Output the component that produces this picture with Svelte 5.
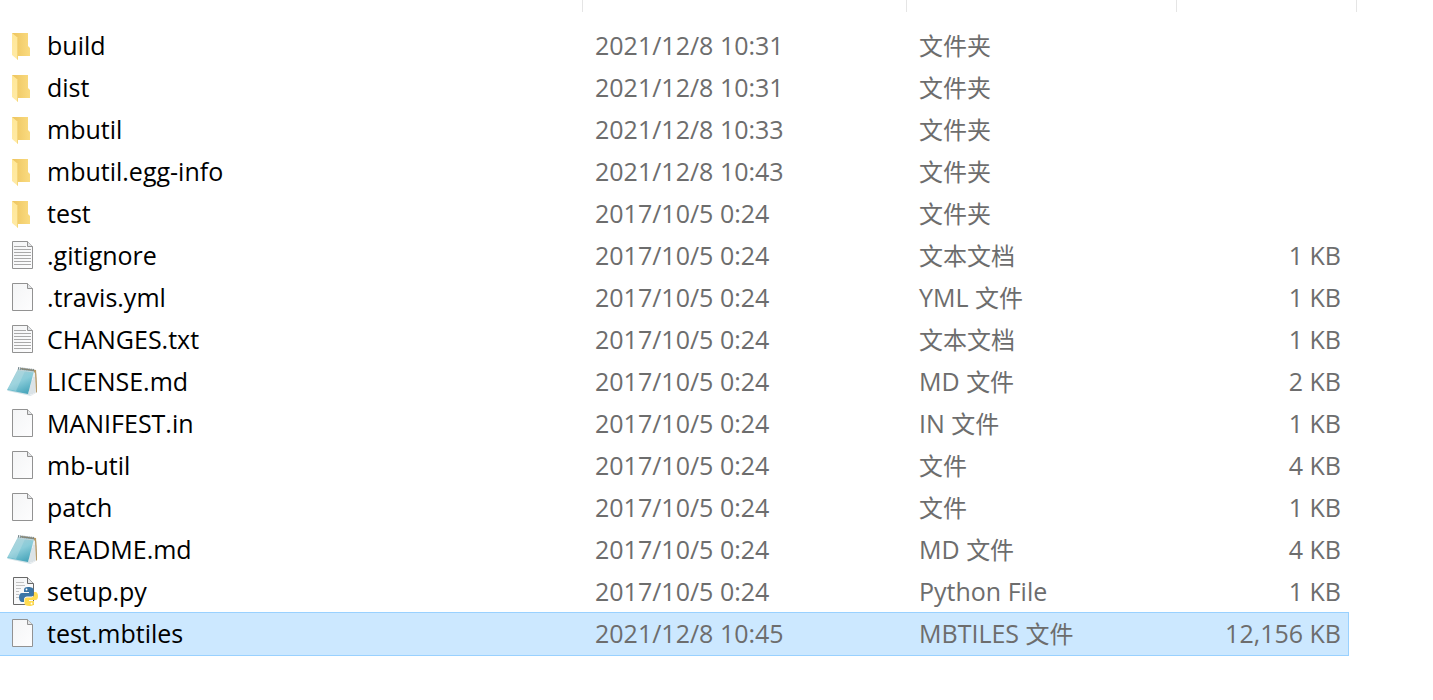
<script>
	let selected = "test.mbtiles";

	const files = [
		{ name: "build", icon: "folder", date: "2021/12/8 10:31", type: "文件夹", size: "" },
		{ name: "dist", icon: "folder", date: "2021/12/8 10:31", type: "文件夹", size: "" },
		{ name: "mbutil", icon: "folder", date: "2021/12/8 10:33", type: "文件夹", size: "" },
		{ name: "mbutil.egg-info", icon: "folder", date: "2021/12/8 10:43", type: "文件夹", size: "" },
		{ name: "test", icon: "folder", date: "2017/10/5 0:24", type: "文件夹", size: "" },
		{ name: ".gitignore", icon: "text", date: "2017/10/5 0:24", type: "文本文档", size: "1 KB" },
		{ name: ".travis.yml", icon: "blank", date: "2017/10/5 0:24", ext: "YML", type: "文件", size: "1 KB" },
		{ name: "CHANGES.txt", icon: "text", date: "2017/10/5 0:24", type: "文本文档", size: "1 KB" },
		{ name: "LICENSE.md", icon: "notepad", date: "2017/10/5 0:24", ext: "MD", type: "文件", size: "2 KB" },
		{ name: "MANIFEST.in", icon: "blank", date: "2017/10/5 0:24", ext: "IN", type: "文件", size: "1 KB" },
		{ name: "mb-util", icon: "blank", date: "2017/10/5 0:24", type: "文件", size: "4 KB" },
		{ name: "patch", icon: "blank", date: "2017/10/5 0:24", type: "文件", size: "1 KB" },
		{ name: "README.md", icon: "notepad", date: "2017/10/5 0:24", ext: "MD", type: "文件", size: "4 KB" },
		{ name: "setup.py", icon: "python", date: "2017/10/5 0:24", ext: "Python File", type: "", size: "1 KB" },
		{ name: "test.mbtiles", icon: "blank", date: "2021/12/8 10:45", ext: "MBTILES", type: "文件", size: "12,156 KB" },
	];
</script>

<!-- gradients shared by all the row icons -->
<svg class="defs" width="0" height="0" aria-hidden="true">
	<defs>
		<linearGradient id="folder-back" x1="0" y1="0" x2="1" y2="0">
			<stop offset="0" stop-color="#edc45f" />
			<stop offset="1" stop-color="#fadb80" />
		</linearGradient>
		<linearGradient id="folder-front" x1="0" y1="0" x2="0" y2="1">
			<stop offset="0" stop-color="#ffe797" />
			<stop offset="1" stop-color="#ffeaa6" />
		</linearGradient>
		<linearGradient id="paper" x1="0" y1="0" x2="1" y2="1">
			<stop offset="0" stop-color="#f4f5f6" />
			<stop offset="1" stop-color="#fdfdfe" />
		</linearGradient>
		<linearGradient id="cover" x1="0.2" y1="0" x2="0.7" y2="1">
			<stop offset="0" stop-color="#a9cfd7" />
			<stop offset="0.5" stop-color="#8accd9" />
			<stop offset="1" stop-color="#45a4ba" />
		</linearGradient>
	</defs>
</svg>

<table>
	<colgroup>
		<col />
		<col class="col-date" />
		<col class="col-type" />
		<col class="col-size" />
		<col class="col-gutter" />
	</colgroup>
	<thead>
		<tr>
			<th aria-label="名称"><div></div></th>
			<th aria-label="修改日期"><div></div></th>
			<th aria-label="类型"><div></div></th>
			<th aria-label="大小" colspan="2"><div></div></th>
		</tr>
	</thead>
	<tbody>
		{#each files as file}
			<tr class:selected={file.name === selected} on:click={() => (selected = file.name)}>
				<td class="name">
					<div>
						<svg width="32" height="32" viewBox="0 0 32 32" aria-hidden="true">
							{#if file.icon === "folder"}
								<path d="M5 4H21V17L23 19V27H7Z" fill="url(#folder-back)" />
								<path d="M5 4L11 9V31L5 26Z" fill="url(#folder-front)" />
								<path d="M10.500 8.500V30.500" stroke="#f5d67a" stroke-width="1" />
							{:else if file.icon === "notepad"}
								<path d="M14 3L29 5L30 27L24 30L18 27Z" fill="#9c7d4c" />
								<path d="M27 5L29 5L30 27L28 28Z" fill="#b89a66" />
								<path d="M26 6L28 8L29 28L24 31L18 28Z" fill="#e9eef1" />
								<path d="M25 15L25 29M23 21L23 29M27 12L27 28" stroke="#bccbd2" stroke-width="0.6" />
								<path d="M0 25L22 28L24 31L1 26Z" fill="#d3e3e8" />
								<path d="M11 4L27 6L21 29L0 25Z" fill="url(#cover)" />
								<path d="M11 5L18 6L9 26L1 24Z" fill="#c3e3e9" opacity="0.35" />
								<path d="M11 3.500L27 5.500" stroke="#76898f" stroke-width="3" stroke-dasharray="1.200 0.900" />
								<path d="M11 5L27 7" stroke="#c3d6da" stroke-width="1" />
							{:else}
								<path
									d={file.icon === "python" ? "M6.500 2.500H20.500L26.500 8.500V29.500H6.500Z" : "M5.500 2.500H20.500L25.500 7.500V29.500H5.500Z"}
									fill="url(#paper)"
									stroke={file.icon === "python" ? "#686868" : "#929292"}
								/>
								<path
									d={file.icon === "python" ? "M20.500 2.500V8.500H26.500" : "M20.500 2.500V7.500H25.500"}
									fill="#e4e6e8"
									stroke={file.icon === "python" ? "#686868" : "#929292"}
								/>
								{#if file.icon === "text"}
									<path
										d="M7 7.500H19M7 10.500H24M7 13.500H24M7 16.500H24M7 19.500H24M7 22.500H24M7 25.500H24"
										stroke="#a9a9a9"
									/>
								{:else if file.icon === "python"}
									<path
										d="M9 7.500H17M9 10.500H18M9 13.500H14M9 16.500H12M9 19.500H12M9 22.500H12"
										stroke="#c2c2c2"
									/>
									<path
										d="M21 12C18 12 17 13 17 15V17H22V18H15C13 18 12 20 12 22.500S13.500 27 15 27H17V24.500C17 22.500 18.500 21.500 20 21.500H24.500C26 21.500 26.500 20.500 26.500 19V15C26.500 13 25 12 21 12Z"
										fill="#3a75a5"
									/>
									<path
										d="M22.500 31C26 31 27 30 27 28.500V26H22V25H28.500C30.500 25 31 23 31 21S30 17 28.500 17H27V19.500C27 21.500 25.500 22.500 24 22.500H20C18.500 22.500 17.500 23.500 17.500 25V28.500C17.500 30 19 31 22.500 31Z"
										fill="#ffdb50"
									/>
									<circle cx="19.500" cy="14.500" r="0.900" fill="#fff" />
									<circle cx="24.500" cy="28.500" r="0.900" fill="#fff" />
								{/if}
							{/if}
						</svg>
						<span>{file.name}</span>
					</div>
				</td>
				<td>{file.date}</td>
				<td>{file.ext ?? ""} <span class="kind">{file.type}</span></td>
				<td class="size">{file.size}</td>
			</tr>
		{/each}
	</tbody>
</table>

<style>
	:global(body) {
		background: #fff;
	}

	.defs {
		position: absolute;
	}

	table {
		width: calc(100% - 76px);
		padding-bottom: 4px;
		table-layout: fixed;
		border-spacing: 0;
		font-family: "Open Sans", "Noto Sans CJK SC", sans-serif;
		font-size: 25px;
		line-height: 40px;
		color: #6d6d6d;
		cursor: default;
	}

	.col-date {
		width: 324px;
	}

	.col-type {
		width: 270px;
	}

	.col-size {
		width: 172px;
	}

	.col-gutter {
		width: 8px;
	}

	th {
		height: 25px;
		padding: 0;
		vertical-align: top;
	}

	th div {
		height: 12px;
		border-right: 1px solid #e5e5e5;
	}

	td {
		padding: 0 0 2px 12px;
		white-space: nowrap;
	}

	.name {
		padding-left: 7px;
		color: #000;
	}

	.name div {
		display: flex;
		align-items: center;
		gap: 8px;
		height: 40px;
	}

	.name svg {
		flex: none;
	}

	.kind {
		font-family: "Noto Sans CJK SC", sans-serif;
		font-size: 24px;
		line-height: 24px;
	}

	.size {
		padding: 0 8px 2px 0;
		text-align: right;
	}

	.selected td {
		background: #cce8ff;
		box-shadow: 0 -1px #99d1ff, 0 1px #99d1ff;
	}

	.selected .size {
		box-shadow: 0 -1px #99d1ff, 0 1px #99d1ff, inset -1px 0 #99d1ff;
	}
</style>
